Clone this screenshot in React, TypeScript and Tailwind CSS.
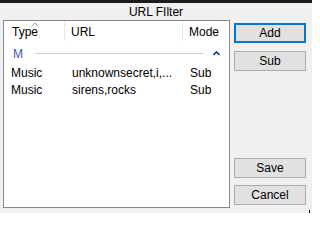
import React from 'react';

const ROWS = [
  { type: 'Music', url: 'unknownsecret,i,...', mode: 'Sub' },
  { type: 'Music', url: 'sirens,rocks', mode: 'Sub' },
];

const font = { fontFamily: '"Liberation Sans", Arial, sans-serif' };

function Button({ label, focused }: { label: string; focused?: boolean }) {
  return (
    <button
      className={`w-[72px] h-[20px] bg-[#e1e1e1] text-[12px] leading-none text-black flex items-center justify-center ${
        focused ? 'border-2 border-[#0078d7]' : 'border border-[#adadad]'
      }`}
    >
      {label}
    </button>
  );
}

export default function App() {
  return (
    <div
      className="w-[312px] h-[213px] bg-[#f0f0f0] flex flex-col overflow-hidden text-black"
      style={font}
    >
      {/* window top edge */}
      <div className="h-[3px] bg-[#1c1c1c]" />

      {/* title */}
      <div className="h-[17px] flex items-center justify-center text-[12px] leading-none">
        URL FIlter
      </div>

      <div className="flex-1 flex pl-[3px] gap-[4px]">
        {/* list view */}
        <div className="w-[227px] h-[188px] bg-white border border-[#828790] flex flex-col">
          {/* header */}
          <div className="h-[20px] flex text-[12px] leading-none">
            <div className="relative w-[61px] border-r border-[#e5e5e5] flex items-center pl-[8px] pt-[2px]">
              Type
              <svg
                className="absolute left-[27px] top-[1px]"
                width="8"
                height="5"
                viewBox="0 0 8 5"
              >
                <path d="M0.5 4.5 L4 1 L7.5 4.5" fill="none" stroke="#9a9a9a" strokeWidth="1" />
              </svg>
            </div>
            <div className="w-[118px] border-r border-[#e5e5e5] flex items-center pl-[6px] pt-[2px]">
              URL
            </div>
            <div className="flex-1 flex items-center pl-[6px] pt-[2px]">Mode</div>
          </div>

          {/* group header */}
          <div className="h-[15px] mt-[5px] flex items-center pl-[9px] pr-[9px] text-[12px] leading-none">
            <span className="text-[#3a5bb0]">M</span>
            <div className="flex-1 h-px bg-[#c9d0da] ml-[12px] mr-[9px]" />
            <svg width="7" height="5" viewBox="0 0 7 5">
              <path d="M0.5 4 L3.5 1 L6.5 4" fill="none" stroke="#1e3a78" strokeWidth="1.6" />
            </svg>
          </div>

          {/* rows */}
          <div className="mt-[3px] flex flex-col">
            {ROWS.map((r, i) => (
              <div key={i} className="h-[17px] flex items-center text-[12px] leading-none">
                <div className="w-[61px] pl-[7px]">{r.type}</div>
                <div className="w-[118px] pl-[7px] whitespace-nowrap overflow-hidden">{r.url}</div>
                <div className="flex-1 pl-[7px]">{r.mode}</div>
              </div>
            ))}
          </div>
        </div>

        {/* buttons */}
        <div className="flex flex-col pt-[3px]">
          <Button label="Add" focused />
          <div className="mt-[8px]">
            <Button label="Sub" />
          </div>
          <div className="mt-auto flex flex-col gap-[7px] mb-[3px]">
            <Button label="Save" />
            <Button label="Cancel" />
          </div>
        </div>
      </div>

      <div className="h-[5px] relative">
        <div className="absolute right-[2px] bottom-0 w-px h-[3px] bg-black" />
      </div>
    </div>
  );
}
